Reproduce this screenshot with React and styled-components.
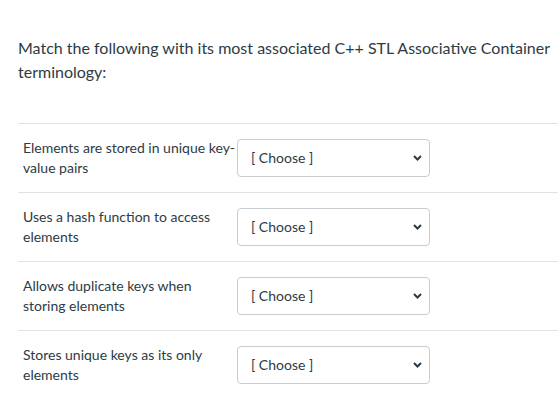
import React from 'react';
import styled, { createGlobalStyle } from 'styled-components';

const GlobalStyle = createGlobalStyle`
  body {
    margin: 0;
    background: #fff;
    font-family: Lato, "Liberation Sans", sans-serif;
    color: #2d3b45;
  }
`;

const Page = styled.section`
  padding: 36px 0 0 18px;
`;

const Question = styled.p`
  margin: 0 0 39px;
  font-size: 16px;
  line-height: 24px;
`;

const Row = styled.div`
  display: flex;
  align-items: center;
  border-top: 1px solid #dfe3e6;
  padding: 14px 0 14px 5px;
  min-height: 40px;
`;

const Label = styled.div`
  width: 213px;
  margin-right: 1px;
  font-size: 14px;
  line-height: 20px;
`;

const Select = styled.div`
  box-sizing: border-box;
  width: 193px;
  height: 38px;
  display: flex;
  align-items: center;
  justify-content: space-between;
  padding: 0 7px 2px 13px;
  border: 1px solid #c7cdd1;
  border-radius: 4px;
  background: #fff;
  font-size: 14px;
  color: #2d3b45;

  svg {
    margin-top: 2px;
  }
`;

const Chevron = () => (
  <svg width="9" height="6" viewBox="0 0 9 6">
    <path d="M1 1l3.5 3.5L8 1" fill="none" stroke="#2d3b45" strokeWidth="2" />
  </svg>
);

const items = [
  'Elements are stored in unique key-value pairs',
  'Uses a hash function to access elements',
  'Allows duplicate keys when storing elements',
  'Stores unique keys as its only elements',
];

export default function App() {
  return (
    <Page>
      <GlobalStyle />
      <Question>
        Match the following with its most associated C++ STL Associative Container terminology:
      </Question>
      {items.map(text => (
        <Row key={text}>
          <Label>{text}</Label>
          <Select>
            <span>[ Choose ]</span>
            <Chevron />
          </Select>
        </Row>
      ))}
    </Page>
  );
}
